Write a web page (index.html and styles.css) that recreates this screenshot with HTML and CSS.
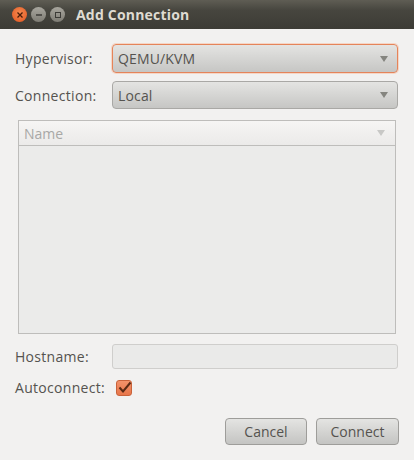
FILE: index.html
```html
<!DOCTYPE html>
<html lang="en">
<head>
<meta charset="utf-8">
<title>Add Connection</title>
<link rel="stylesheet" href="styles.css">
</head>
<body>
<div class="window">
  <header class="titlebar">
    <div class="controls">
      <span class="ctl close"><svg viewBox="0 0 8 8" width="8" height="8"><path d="M1.500 1.500l5 5M6.500 1.500l-5 5" stroke="#4a1c08" stroke-width="1.300" fill="none"/></svg></span>
      <span class="ctl other"><svg viewBox="0 0 8 8" width="8" height="8"><path d="M1 4h6" stroke="#3c3b37" stroke-width="1.500" fill="none"/></svg></span>
      <span class="ctl other"><svg viewBox="0 0 8 8" width="8" height="8"><rect x="1.500" y="1.500" width="5" height="5" stroke="#3c3b37" stroke-width="1" fill="none"/></svg></span>
    </div>
    <h1 class="title">Add Connection</h1>
  </header>
  <main class="content">
    <div class="row row-hyper">
      <label class="label">Hypervisor:</label>
      <div class="combo focused"><span>QEMU/KVM</span><i class="arrow"></i></div>
    </div>
    <div class="row row-conn">
      <label class="label">Connection:</label>
      <div class="combo"><span>Local</span><i class="arrow"></i></div>
    </div>
    <section class="tree">
      <div class="tree-head"><span>Name</span><i class="arrow pale"></i></div>
      <div class="tree-body"></div>
    </section>
    <div class="row row-host">
      <label class="label">Hostname:</label>
      <div class="entry"></div>
    </div>
    <div class="row row-auto">
      <label class="label">Autoconnect:</label>
      <span class="check"><svg viewBox="0 0 16 16" width="16" height="16"><path d="M3.500 7.500l3.500 4L14.500 2.500" stroke="#5a2a14" stroke-width="2" fill="none"/></svg></span>
    </div>
    <div class="actions">
      <button class="btn btn-cancel">Cancel</button>
      <button class="btn btn-connect">Connect</button>
    </div>
  </main>
</div>
</body>
</html>
```
FILE: styles.css
```css
* { box-sizing: border-box; }
html, body { margin: 0; padding: 0; }
body { width: 414px; height: 460px; overflow: hidden; background: #f2f1f0; font-family: "Open Sans", "Noto Sans", sans-serif; font-size: 14px; color: #55534f; }
.window { display: flex; flex-direction: column; height: 460px; }
.titlebar { height: 29px; flex: none; display: flex; align-items: center; padding-left: 12px; background: linear-gradient(#5f5d54, #47463f 35%, #3c3b35); }
.controls { display: flex; gap: 4px; }
.ctl { width: 15px; height: 15px; border-radius: 50%; display: flex; align-items: center; justify-content: center; }
.close { background: radial-gradient(circle at 50% 40%, #f48a50, #e2541f); }
.other { background: linear-gradient(#a8a69e, #7e7c74); }
.title { margin: 0 0 0 11px; font-size: 14px; font-weight: 700; color: #dfdbd2; letter-spacing: 0.2px; }
.content { flex: 1; padding: 15px; display: flex; flex-direction: column; }
.row { display: flex; align-items: center; }
.label { width: 97px; flex: none; font-size: 14px; letter-spacing: 0.3px; }
.combo { width: 286px; height: 29px; display: flex; align-items: center; justify-content: space-between; padding: 0 9px 0 5px; border: 1px solid #a9a8a5; border-radius: 4px; background: linear-gradient(#e4e4e2, #c6c6c4); letter-spacing: 0.15px; }
.combo.focused { border-color: #e5845a; box-shadow: 0 0 0 1px #f5d6c6; }
.row-conn { margin-top: 8px; }
.row-conn .combo { height: 28px; }
.arrow { width: 0; height: 0; border-left: 4px solid transparent; border-right: 4px solid transparent; border-top: 6px solid #85857f; }
.arrow.pale { border-top-color: #c8c8c6; }
.tree { margin: 11px 0 0 3px; width: 378px; height: 214px; border: 1px solid #bebdbb; display: flex; flex-direction: column; }
.tree-head { height: 25px; flex: none; display: flex; align-items: center; justify-content: space-between; padding: 0 10px 0 5px; border-bottom: 1px solid #bebdbb; background: linear-gradient(#f6f5f4, #ebeae9); color: #a8a8a6; }
.tree-body { flex: 1; background: #ebebea; }
.row-host { margin-top: 10px; }
.entry { width: 286px; height: 25px; border: 1px solid #cfcecc; border-radius: 3px; background: #eaeae9; }
.row-auto { margin-top: 9px; }
.check { margin-left: 4px; width: 16px; height: 16px; border: 1px solid #c9623a; border-radius: 3px; background: linear-gradient(#f2926a, #e8764a); display: block; }
.check svg { display: block; margin: -1px; }
.actions { display: flex; justify-content: flex-end; gap: 9px; margin-top: 21px; }
.btn { height: 27px; padding: 0; border: 1px solid #9e9d9a; border-radius: 4px; background: linear-gradient(#e4e4e2, #c4c4c2); font: inherit; color: #55534f; }
.btn-cancel { width: 82px; }
.btn-connect { width: 83px; }
```
